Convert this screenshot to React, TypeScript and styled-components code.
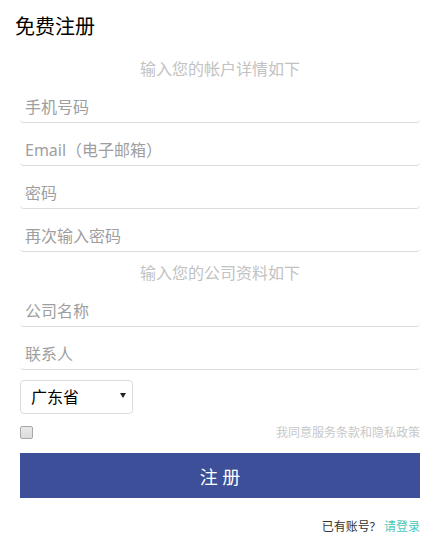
import React, { useState } from 'react';
import styled, { createGlobalStyle } from 'styled-components';

const GlobalStyle = createGlobalStyle`
  body {
    margin: 0;
    background: #fff;
    font-family: "Noto Sans", "Noto Sans CJK SC", sans-serif;
  }
`;

const Page = styled.div`
  padding: 13px 19px 0 15px;
`;

const Title = styled.h3`
  margin: 0 0 7px;
  font-size: 20px;
  line-height: 28px;
  font-weight: normal;
  color: #000;
`;

const Form = styled.form`
  display: flex;
  flex-direction: column;
  width: 400px;
  margin-left: 5px;
`;

const Subtitle = styled.p`
  margin: 0;
  padding-top: 10px;
  font-size: 16px;
  line-height: 22px;
  text-align: center;
  color: #c2c2c2;
`;

const Input = styled.input`
  box-sizing: border-box;
  height: 35px;
  margin-top: 8px;
  padding: 4px 5px 0;
  border: none;
  border-bottom: 1px solid #dcdcdc;
  border-radius: 4px;
  font-family: inherit;
  font-size: 16px;
  color: #333;
  outline: none;
  &::placeholder {
    color: #9e9e9e;
  }
`;

const SelectWrap = styled.div`
  position: relative;
  width: 113px;
  margin-top: 10px;
`;

const Select = styled.select`
  appearance: none;
  box-sizing: border-box;
  width: 100%;
  height: 34px;
  padding: 0 20px 0 10px;
  border: 1px solid #dcdcdc;
  border-radius: 4px;
  background: #fff;
  font-family: inherit;
  font-size: 16px;
  color: #000;
  outline: none;
`;

const Arrow = styled.span`
  position: absolute;
  right: 7px;
  top: 13px;
  width: 0;
  height: 0;
  border-left: 3.5px solid transparent;
  border-right: 3.5px solid transparent;
  border-top: 5px solid #222;
  pointer-events: none;
`;

const AgreeRow = styled.label`
  display: flex;
  align-items: center;
  justify-content: space-between;
  height: 20px;
  margin-top: 8px;
`;

const Check = styled.input`
  appearance: none;
  box-sizing: border-box;
  width: 13px;
  height: 13px;
  margin: 0;
  border: 1px solid #a8a8a8;
  border-radius: 2px;
  background: linear-gradient(#e9e9e9, #dcdcdc);
  &:checked {
    background: #3c4f98;
  }
`;

const AgreeText = styled.span`
  font-size: 12px;
  color: #c8c8c8;
`;

const Submit = styled.button`
  height: 45px;
  margin-top: 11px;
  border: none;
  background: #3c4f98;
  color: #fff;
  font-family: inherit;
  font-size: 18px;
  cursor: pointer;
`;

const Footer = styled.div`
  margin-top: 20px;
  text-align: right;
  font-size: 12px;
  line-height: 18px;
  color: #333;
`;

const LoginLink = styled.a`
  margin-left: 9px;
  color: #4bc9b9;
  text-decoration: none;
`;

const App: React.FC = () => {
  const [agree, setAgree] = useState(false);

  return (
    <>
      <GlobalStyle />
      <Page>
        <Title>免费注册</Title>
        <Form onSubmit={(e) => e.preventDefault()}>
          <Subtitle>输入您的帐户详情如下</Subtitle>
          <Input type="text" placeholder="手机号码" />
          <Input type="email" placeholder="Email（电子邮箱）" />
          <Input type="password" placeholder="密码" />
          <Input type="password" placeholder="再次输入密码" />
          <Subtitle>输入您的公司资料如下</Subtitle>
          <Input type="text" placeholder="公司名称" />
          <Input type="text" placeholder="联系人" />
          <SelectWrap>
            <Select defaultValue="gd">
              <option value="gd">广东省</option>
              <option value="bj">北京市</option>
              <option value="sh">上海市</option>
            </Select>
            <Arrow />
          </SelectWrap>
          <AgreeRow>
            <Check type="checkbox" checked={agree} onChange={(e) => setAgree(e.target.checked)} />
            <AgreeText>我同意服务条款和隐私政策</AgreeText>
          </AgreeRow>
          <Submit type="submit">注 册</Submit>
          <Footer>
            已有账号?<LoginLink href="#">请登录</LoginLink>
          </Footer>
        </Form>
      </Page>
    </>
  );
};

export default App;
